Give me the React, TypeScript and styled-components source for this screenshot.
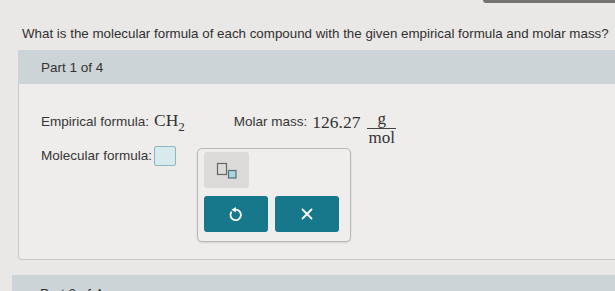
import React from 'react'
import styled, { createGlobalStyle } from 'styled-components'

const GlobalStyle = createGlobalStyle`
  html, body {
    margin: 0;
    padding: 0;
    overflow: hidden;
    background-color: #eae8e6;
  }
  body {
    font-family: 'Liberation Sans', Arial, sans-serif;
    color: #353535;
  }
`

const Page = styled.div`
  width: 615px;
  height: 291px;
  overflow: hidden;
  display: flex;
  flex-direction: column;
  & > * {
    flex-shrink: 0;
  }
`

const TopStrip = styled.div`
  height: 4px;
  display: flex;
  justify-content: flex-end;
`

const TopBar = styled.div`
  width: 132px;
  height: 3px;
  background-color: #747474;
  border-radius: 0 0 0 3px;
`

const Question = styled.div`
  padding: 21px 0 0 22px;
  height: 25px;
  font-size: 13.35px;
  line-height: 17px;
  color: #303030;
  white-space: nowrap;
`

const Card = styled.div`
  margin: 0 -12px 0 ${({ $left }: { $left: number }) => $left}px;
  display: flex;
  flex-direction: column;
`

const CardHeader = styled.div`
  height: 34px;
  background-color: #ccd4d7;
  padding: 0 0 0 23px;
  display: flex;
  align-items: center;
  font-size: 13.5px;
  color: #333;
`

const CardHeaderLow = styled(CardHeader)`
  align-items: flex-start;
  padding-top: 11px;
  height: 30px;
  padding-left: 28px;
`

const CardBody = styled.div`
  height: 176px;
  box-sizing: border-box;
  background-color: #efedeb;
  border: 1px solid #cac9c7;
  border-top: none;
  border-radius: 0 0 4px 4px;
  padding: 24px 0 0 22px;
`

const Row = styled.div`
  display: flex;
  align-items: center;
  height: 28px;
`

const Label = styled.span`
  font-size: 13.5px;
  line-height: 20px;
  color: #363636;
  white-space: nowrap;
`

const MathText = styled.span`
  font-family: 'Liberation Serif', 'Times New Roman', serif;
  font-size: 17.5px;
  color: #333;
  margin-left: 5px;
  white-space: nowrap;
  sub {
    font-size: 13px;
    vertical-align: -5px;
  }
`

const Spacer = styled.div`
  width: ${({ $w }: { $w: number }) => $w}px;
  height: ${({ $h }: { $w: number; $h?: number }) => $h || 0}px;
  flex-shrink: 0;
`

const Fraction = styled.span`
  display: inline-flex;
  flex-direction: column;
  align-items: stretch;
  text-align: center;
  margin-left: 7px;
  margin-top: 12px;
  font-family: 'Liberation Serif', 'Times New Roman', serif;
  font-size: 17px;
  line-height: 14px;
  color: #333;
`

const Numerator = styled.span`
  padding: 0 0 2px;
`

const Denominator = styled.span`
  padding: 2px 1px 0;
  border-top: 1px solid #444;
`

const SecondRow = styled.div`
  display: flex;
  align-items: flex-start;
  margin-top: 10px;
`

const AnswerBox = styled.div`
  width: 22px;
  height: 20px;
  box-sizing: border-box;
  margin-left: 2px;
  background-color: #d9eaee;
  border: 1.5px solid #8db6c0;
  border-radius: 2px;
`

const Palette = styled.div`
  margin: 2px 0 0 21px;
  width: 154px;
  height: 94px;
  box-sizing: border-box;
  border: 1px solid #b9b8b6;
  border-radius: 5px;
  background-color: #f0eeec;
  padding: 3px 6px 0;
  display: flex;
  flex-direction: column;
  box-shadow: 0 1px 2px rgba(0, 0, 0, 0.12);
`

const KeyButton = styled.div`
  width: 45px;
  height: 36px;
  background-color: #dddbd9;
  border-radius: 3px;
  display: flex;
  align-items: center;
  justify-content: center;
`

const ActionRow = styled.div`
  display: flex;
  gap: 7px;
  margin-top: 8px;
`

const ActionButton = styled.div`
  width: 64px;
  height: 36px;
  background-color: #17788b;
  border-radius: 3px;
  display: flex;
  align-items: center;
  justify-content: center;
`

const SubscriptIcon = () => (
  <svg width="22" height="18" viewBox="0 0 22 18">
    <rect x="1.5" y="2.5" width="9" height="11" fill="none" stroke="#666" strokeWidth="1.2" />
    <rect x="12.5" y="9.5" width="7.5" height="7.5" fill="#a9d5e0" stroke="#55707a" strokeWidth="1.2" />
  </svg>
)

const UndoIcon = () => (
  <svg width="16" height="16" viewBox="0 0 14 14">
    <path
      d="M6.5 3.2 A4.6 4.6 0 1 1 2.8 5.4"
      fill="none"
      stroke="#fff"
      strokeWidth="1.6"
      strokeLinecap="round"
    />
    <path d="M3 3.2 L6.8 0.8 L6.8 5.6 Z" fill="#fff" />
  </svg>
)

const CloseIcon = () => (
  <svg width="12" height="12" viewBox="0 0 12 12">
    <path d="M1.5 1.5 L10.5 10.5 M10.5 1.5 L1.5 10.5" stroke="#fff" strokeWidth="1.8" strokeLinecap="round" />
  </svg>
)

const App = () => {
  return (
    <>
      <GlobalStyle />
      <Page>
        <TopStrip>
          <TopBar />
        </TopStrip>
        <Question>
          What is the molecular formula of each compound with the given empirical formula and molar mass?
        </Question>
        <Card $left={18}>
          <CardHeader>Part 1 of 4</CardHeader>
          <CardBody>
            <Row>
              <Label>Empirical formula:</Label>
              <MathText>
                CH<sub>2</sub>
              </MathText>
              <Spacer $w={49} />
              <Label>Molar mass:</Label>
              <MathText>126.27</MathText>
              <Fraction>
                <Numerator>g</Numerator>
                <Denominator>mol</Denominator>
              </Fraction>
            </Row>
            <SecondRow>
              <Label>Molecular formula:</Label>
              <AnswerBox />
              <Palette>
                <KeyButton>
                  <SubscriptIcon />
                </KeyButton>
                <ActionRow>
                  <ActionButton>
                    <UndoIcon />
                  </ActionButton>
                  <ActionButton>
                    <CloseIcon />
                  </ActionButton>
                </ActionRow>
              </Palette>
            </SecondRow>
          </CardBody>
        </Card>
        <Spacer $w={0} $h={15} />
        <Card $left={12}>
          <CardHeaderLow>Part 2 of 4</CardHeaderLow>
        </Card>
      </Page>
    </>
  )
}

export default App
